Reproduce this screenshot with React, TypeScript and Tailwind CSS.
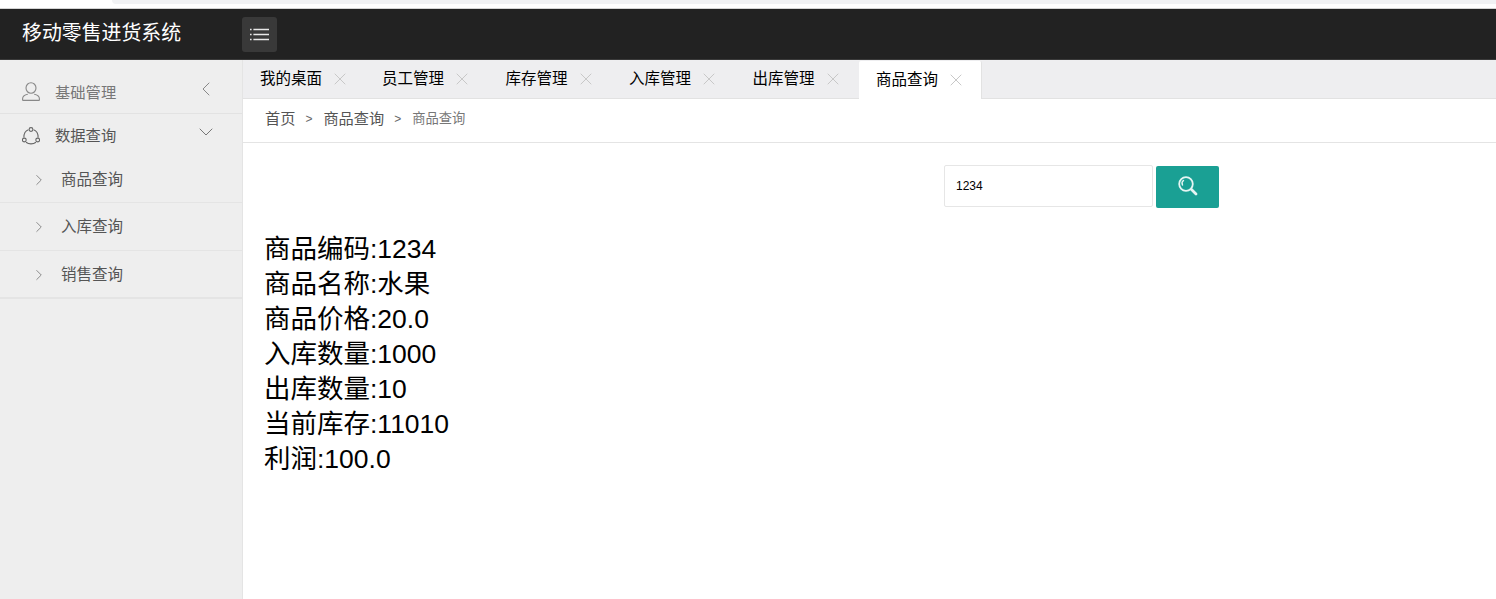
import { ChevronDown, ChevronLeft, ChevronRight, X } from "lucide-react";

const font = "font-['Liberation_Sans','Noto_Sans_CJK_SC',sans-serif]";

const tabs = ["我的桌面", "员工管理", "库存管理", "入库管理", "出库管理"];
const subMenu = ["商品查询", "入库查询", "销售查询"];
const details = [
  "商品编码:1234",
  "商品名称:水果",
  "商品价格:20.0",
  "入库数量:1000",
  "出库数量:10",
  "当前库存:11010",
  "利润:100.0",
];

const App = () => {
  return (
    <div className={`${font} flex h-[599px] w-[1496px] flex-col overflow-hidden bg-white`}>
      {/* Top strip left over from the browser */}
      <div className="flex h-[9px] shrink-0 border-b border-[#d4d4d4] bg-white">
        <div className="ml-[112px] h-[4px] flex-1 rounded-bl-lg bg-[#f1f2f4]" />
      </div>

      {/* Header */}
      <header className="flex h-[51px] shrink-0 items-center border-b border-[#3a3a3a] bg-[#222222]">
        <div className="w-[242px] pl-[22px] text-[19.900px] leading-none text-white">移动零售进货系统</div>
        <button className="mt-[1px] flex h-[35px] w-[35px] items-center justify-center rounded-[3px] bg-[#393939]">
          <svg width="19" height="13" viewBox="0 0 19 13" fill="none" stroke="#e8e8e8" strokeWidth="1.3">
            <path d="M0 1.5h1.600M3.400 1.500H19M0 6.500h1.600M3.400 6.500H19M0 11.500h1.600M3.400 11.500H19" />
          </svg>
        </button>
      </header>

      <div className="flex min-h-0 flex-1">
        {/* Sidebar */}
        <aside className="w-[243px] shrink-0 border-r border-[#e4e4e4] bg-[#eeeeee]">
          <div className="flex h-[54px] items-center border-b border-[#e2e2e2] pl-[22px] pr-[24px] pt-[12px] text-[15.300px] text-[#777777]">
            <svg className="mt-[-2px]" width="18" height="19" viewBox="0 0 18 19" fill="none" stroke="#888888" strokeWidth="1.1">
              <ellipse cx="9" cy="6" rx="5" ry="5.300" />
              <path d="M.6 18.400v-1.600c0-2.600 3-4.200 5.200-4.600M17.400 18.400v-1.600c0-2.600-3-4.200-5.200-4.600M.6 18.400h16.800" />
            </svg>
            <span className="ml-[15px] mt-[2px] flex-1">基础管理</span>
            <ChevronLeft className="mt-[-7px] h-[24px] w-[24px] text-[#888888]" strokeWidth={1} />
          </div>

          <div className="flex h-[43px] items-center pl-[22px] pr-[24px] text-[15.300px] text-[#555555]">
            <svg className="mt-[1px]" width="18" height="18" viewBox="0 0 18 18" fill="none" stroke="#666666" strokeWidth="1.1">
              <path d="M6.400 2.800C3.600 3.800 1.800 6.400 1.900 10.600M11.600 2.800c2.800 1 4.600 3.600 4.500 7.800M4 15.200c2.800 2.200 7.200 2.200 10 0" />
              <circle cx="9" cy="2.500" r="1.900" />
              <circle cx="2.300" cy="13" r="1.900" />
              <circle cx="15.700" cy="13" r="1.900" />
            </svg>
            <span className="ml-[15px] mt-[2px] flex-1">数据查询</span>
            <ChevronDown className="mt-[-8px] h-[24px] w-[24px] text-[#777777]" strokeWidth={1} />
          </div>

          {subMenu.map((item, i) => (
            <div
              key={item}
              className={`flex items-center pl-[30px] text-[15.500px] text-[#555555] ${
                i === 0
                  ? "h-[46px] border-b border-[#e4e4e4]"
                  : i === 1
                    ? "h-[48px] border-b border-[#e4e4e4]"
                    : "h-[48px] border-b-2 border-[#e4e4e4] pt-[2px]"
              }`}
            >
              <ChevronRight className="h-[18px] w-[18px] text-[#777777]" strokeWidth={1.1} />
              <span className="ml-[13px]">{item}</span>
            </div>
          ))}
        </aside>

        {/* Main */}
        <main className="min-w-0 flex-1">
          <div className="flex h-[39px] items-stretch border-b border-[#e2e2e2] bg-[#eeeef0] pl-[1px]">
            {tabs.map((tab, i) => (
              <div
                key={tab}
                className={`flex items-center text-[15.500px] text-black ${i === 0 ? "w-[123px] pl-[16px]" : "w-[123.500px] pl-[15px]"}`}
              >
                <span>{tab}</span>
                <X className="ml-[8px] h-[20px] w-[20px] text-[#c8c8c8]" strokeWidth={1.2} />
              </div>
            ))}
            <div className="mb-[-1px] ml-[-2px] mt-[1px] flex w-[123px] items-center rounded-t-[2px] border-r border-[#e2e2e2] bg-white pl-[17px] text-[15.500px] text-black">
              <span>商品查询</span>
              <X className="ml-[8px] h-[20px] w-[20px] text-[#c8c8c8]" strokeWidth={1.2} />
            </div>
          </div>

          <nav className="flex h-[44px] items-center border-b border-[#e4e4e4] pb-[3px] pl-[22px] text-[15.200px] text-[#555555]">
            <span>首页</span>
            <span className="ml-[10px] text-[12px] text-[#666666]">&gt;</span>
            <span className="ml-[11px]">商品查询</span>
            <span className="ml-[10px] text-[12px] text-[#666666]">&gt;</span>
            <span className="ml-[11px] text-[13.300px] text-[#777777]">商品查询</span>
          </nav>

          <div className="flex pl-[701px] pt-[22px]">
            <input
              readOnly
              value="1234"
              className="h-[42px] w-[209px] rounded-[2px] border border-[#e6e6e6] bg-white pl-[11px] text-[12px] text-black outline-none"
            />
            <button className="ml-[3px] mt-[1px] flex h-[42px] w-[63px] items-center justify-center rounded-[2px] bg-[#1aa094] pb-[3px]">
              <svg width="20" height="20" viewBox="0 0 20 20" fill="none" stroke="#e6f5f3" strokeLinecap="round">
                <circle cx="8" cy="8" r="6.800" strokeWidth="1.800" />
                <path d="M5.500 4.500c-1.400 1-1.700 3-1 4.500" strokeWidth="1.400" />
                <path d="M13.500 13.500l4.500 4.500" strokeWidth="2.800" />
              </svg>
            </button>
          </div>

          <div className="mt-[24px] pl-[21px] text-[26.500px] leading-[35px] text-black">
            {details.map((line) => (
              <div key={line}>{line}</div>
            ))}
          </div>
        </main>
      </div>
    </div>
  );
};

export default App;
